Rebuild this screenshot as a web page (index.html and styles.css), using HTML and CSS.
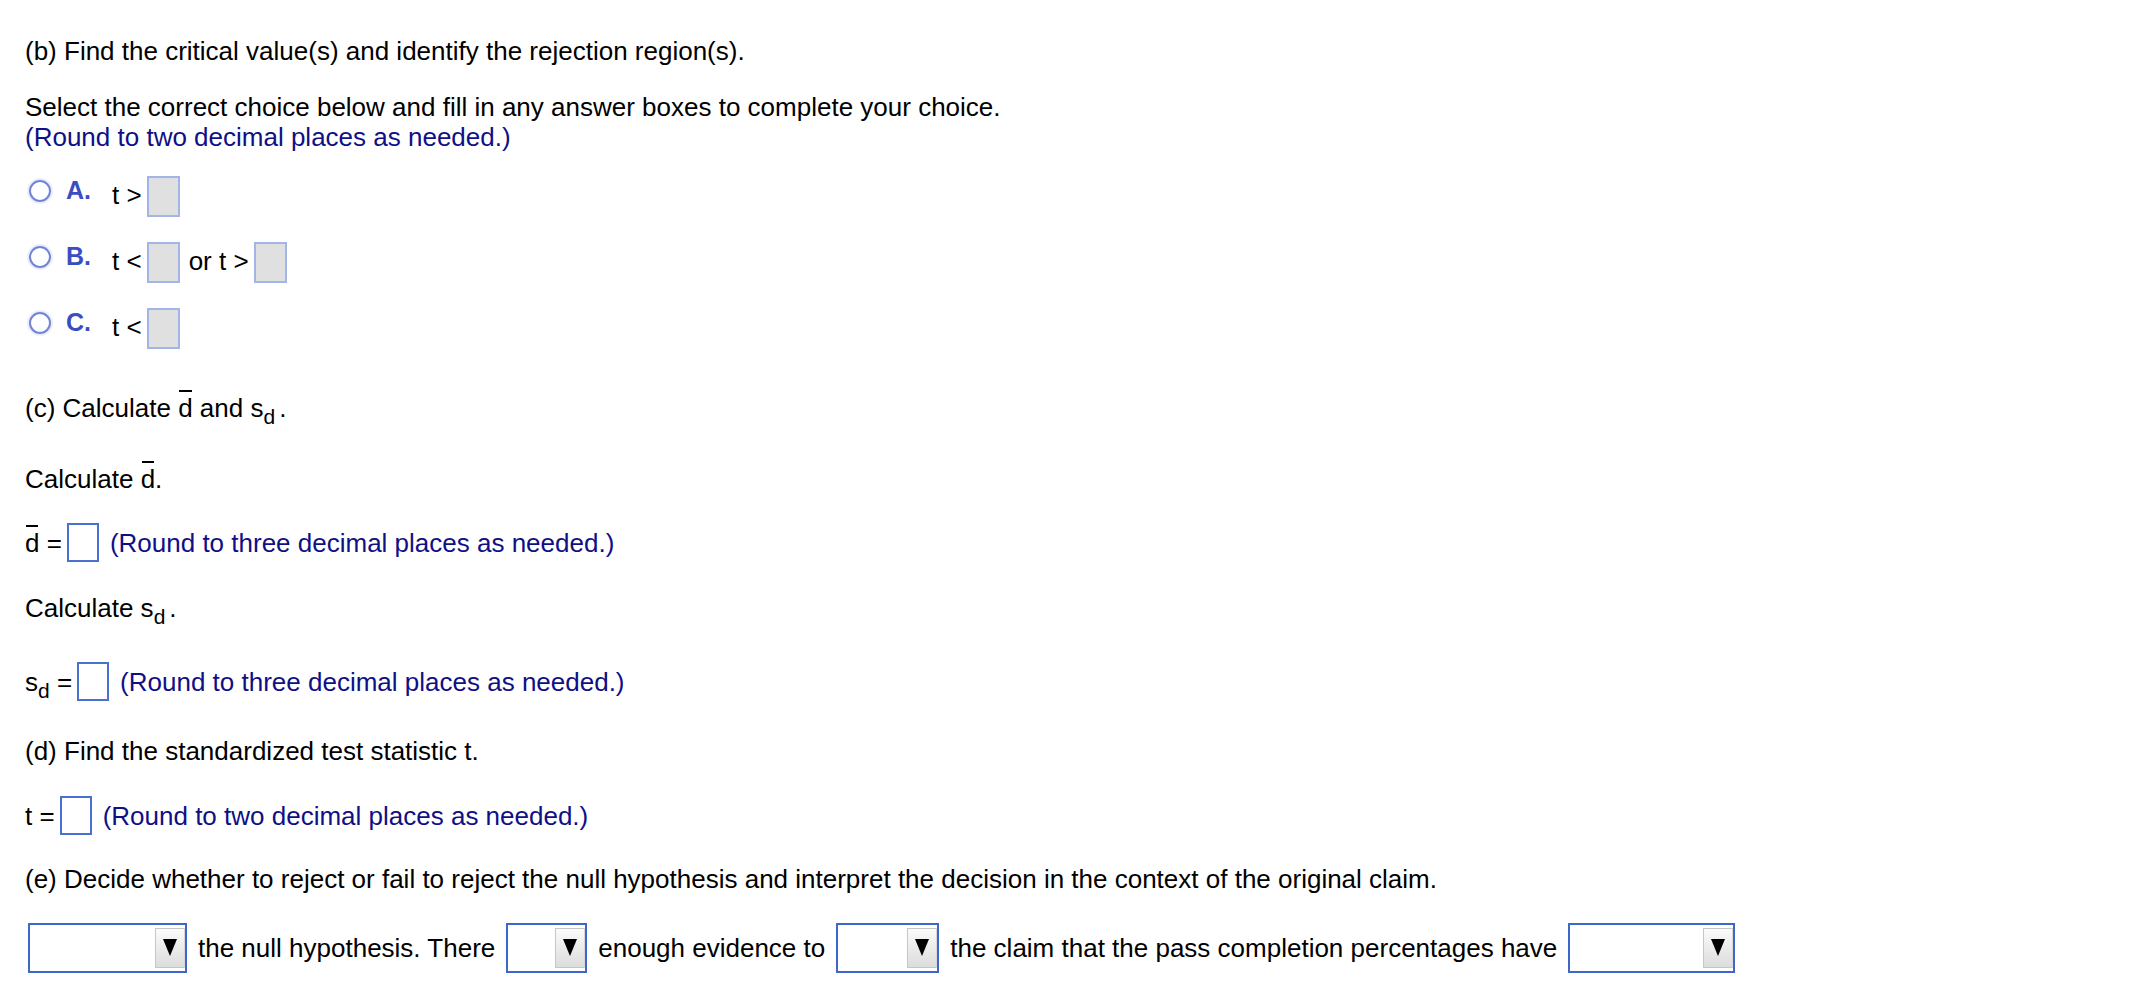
FILE: index.html
```html
<!DOCTYPE html>
<html>
<head>
<meta charset="utf-8">
<link rel="stylesheet" href="styles.css">
</head>
<body>
<div class="page">
  <p class="line">(b) Find the critical value(s) and identify the rejection region(s).</p>
  <div class="instr">
    <p class="line">Select the correct choice below and fill in any answer boxes to complete your choice.</p>
    <p class="line note">(Round to two decimal places as needed.)</p>
  </div>
  <div class="choices">
    <div class="choice">
      <span class="radio"></span>
      <span class="letter">A.</span>
      <span class="expr">t &gt;</span>
      <span class="gbox"></span>
    </div>
    <div class="choice">
      <span class="radio"></span>
      <span class="letter">B.</span>
      <span class="expr">t &lt;</span>
      <span class="gbox"></span>
      <span class="expr mid">or t &gt;</span>
      <span class="gbox"></span>
    </div>
    <div class="choice">
      <span class="radio"></span>
      <span class="letter">C.</span>
      <span class="expr">t &lt;</span>
      <span class="gbox"></span>
    </div>
  </div>

  <p class="line sec-c">(c) Calculate <span class="bar">d</span> and s<span class="sub">d</span><span class="dot">.</span></p>
  <p class="line calc-d">Calculate <span class="bar">d</span>.</p>
  <div class="ans ans-d">
    <span class="lhs"><span class="bar">d</span> =</span>
    <span class="abox"></span>
    <span class="note hint">(Round to three decimal places as needed.)</span>
  </div>
  <p class="line calc-s">Calculate s<span class="sub">d</span><span class="dot">.</span></p>
  <div class="ans ans-s">
    <span class="lhs">s<span class="sub">d</span> =</span>
    <span class="abox"></span>
    <span class="note hint">(Round to three decimal places as needed.)</span>
  </div>
  <p class="line sec-d">(d) Find the standardized test statistic t.</p>
  <div class="ans ans-t">
    <span class="lhs">t =</span>
    <span class="abox"></span>
    <span class="note hint">(Round to two decimal places as needed.)</span>
  </div>
  <p class="line sec-e">(e) Decide whether to reject or fail to reject the null hypothesis and interpret the decision in the context of the original claim.</p>
  <div class="decide">
    <span class="dd dd1"><span class="dd-btn"><span class="tri"></span></span></span>
    <span class="dtext">the null hypothesis. There</span>
    <span class="dd dd2"><span class="dd-btn"><span class="tri"></span></span></span>
    <span class="dtext">enough evidence to</span>
    <span class="dd dd3"><span class="dd-btn"><span class="tri"></span></span></span>
    <span class="dtext">the claim that the pass completion percentages have</span>
    <span class="dd dd4"><span class="dd-btn"><span class="tri"></span></span></span>
  </div>
</div>
</body>
</html>
```
FILE: styles.css
```css
html, body {
  margin: 0;
  padding: 0;
  background: #ffffff;
}
body {
  font-family: "Liberation Sans", Arial, sans-serif;
  font-size: 26px;
  line-height: 30px;
  color: #000000;
}
.page {
  padding: 36px 0 0 25px;
}
.line {
  margin: 0;
  white-space: nowrap;
}
.note {
  color: #0f0f86;
}
.instr {
  margin-top: 26px;
}
.choices {
  margin-top: 24px;
  display: flex;
  flex-direction: column;
  gap: 25px;
}
.choice {
  display: flex;
  align-items: flex-start;
  height: 41px;
}
.radio {
  box-sizing: border-box;
  width: 22px;
  height: 22px;
  margin: 4px 0 0 4px;
  border: 2.5px solid #7384d6;
  border-radius: 50%;
  box-shadow: 0 0 0 2px rgba(236, 238, 246, 0.9), 0 0 1px 1px rgba(160, 170, 220, 0.4);
}
.letter {
  width: 46px;
  margin-left: 15px;
  font-size: 25px;
  font-weight: bold;
  color: #3a4dc2;
  line-height: 28px;
}
.expr {
  margin-top: 4px;
}
.expr.mid {
  margin-left: 9px;
}
.gbox {
  box-sizing: border-box;
  width: 33px;
  height: 41px;
  margin-left: 5px;
  background: #e0e0e0;
  border: 2px solid #a3b5e6;
}
.bar {
  position: relative;
}
.bar::before {
  content: "";
  position: absolute;
  left: 1px;
  right: 1px;
  top: -3px;
  height: 2px;
  background: #000000;
}
.sub {
  font-size: 21px;
  line-height: 0;
  vertical-align: -7px;
}
.dot {
  margin-left: 4px;
}
.sec-c {
  margin-top: 44px;
}
.calc-d {
  margin-top: 41px;
}
.ans {
  display: flex;
  align-items: center;
  height: 39px;
  white-space: nowrap;
}
.ans-d {
  margin-top: 29px;
}
.calc-s {
  margin-top: 31px;
}
.ans-s {
  margin-top: 39px;
}
.sec-d {
  margin-top: 35px;
}
.ans-t {
  margin-top: 30px;
}
.abox {
  box-sizing: border-box;
  width: 32px;
  height: 39px;
  margin-left: 5px;
  background: #ffffff;
  border: 2px solid #4a71cf;
}
.hint {
  margin-left: 11px;
}
.sec-e {
  margin-top: 29px;
}
.decide {
  margin-top: 29px;
  display: flex;
  align-items: center;
  height: 50px;
  white-space: nowrap;
}
.dd {
  box-sizing: border-box;
  height: 50px;
  border: 2px solid #3f67c9;
  background: #ffffff;
  display: flex;
  justify-content: flex-end;
  align-items: center;
}
.dd1 {
  width: 159px;
  margin-left: 3px;
}
.dd2 {
  width: 81px;
}
.dd3 {
  width: 103px;
}
.dd4 {
  width: 167px;
}
.dd-btn {
  box-sizing: border-box;
  width: 30px;
  height: 40px;
  margin-top: -1px;
  border: 1px solid #c6c6c6;
  border-right-color: #d8d8d8;
  background: linear-gradient(#fbfbfb, #dcdcdc);
  display: flex;
  justify-content: center;
  align-items: center;
}
.tri {
  width: 0;
  height: 0;
  border-left: 7px solid transparent;
  border-right: 7px solid transparent;
  border-top: 17px solid #000000;
}
.dtext {
  margin: 0 11px;
}
```
